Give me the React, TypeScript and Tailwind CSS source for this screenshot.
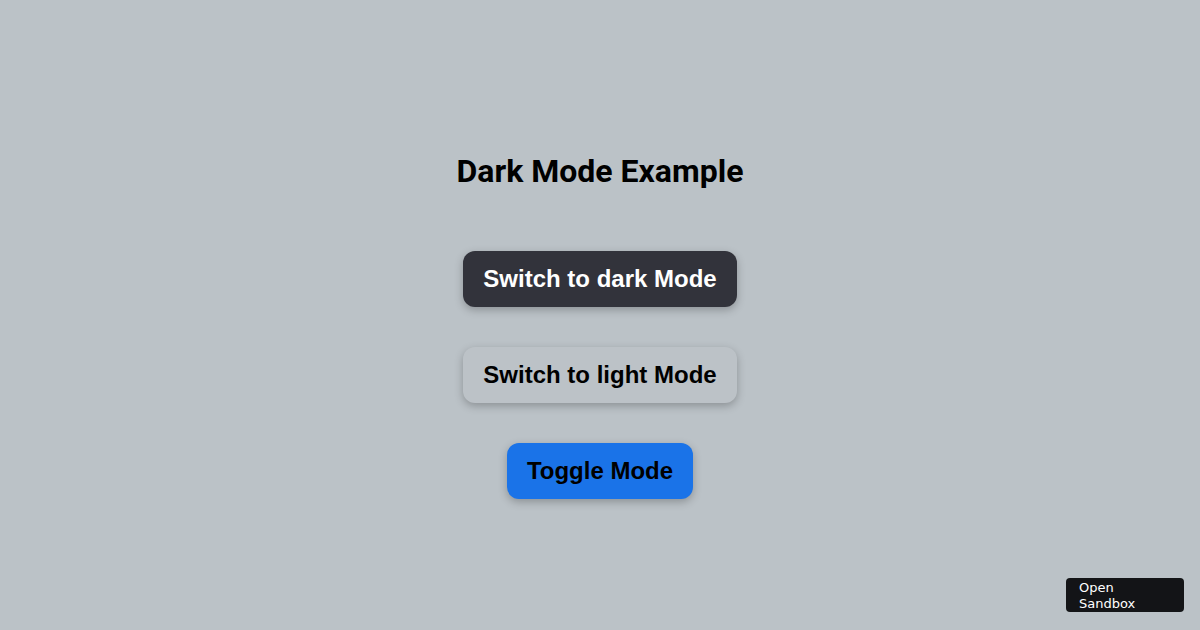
import React from "react";

const App = () => {
    return (
        <div className="relative w-full h-[630px] bg-[#bbc2c7] overflow-hidden">
            <div className="flex flex-col items-center pt-[152px]">
                {/* Title */}
                <h1 className="text-[32px] leading-[38px] font-bold text-black mb-[61px] font-['Roboto',sans-serif]">
                    Dark Mode Example
                </h1>

                {/* Buttons */}
                <div className="flex flex-col items-center gap-[40px] font-['Liberation_Sans',Arial,sans-serif]">
                    <button className="h-[56px] px-[20px] rounded-[12px] bg-[#32333b] text-white text-[24px] font-bold shadow-[0_3px_8px_rgba(0,0,0,0.25)]">
                        Switch to dark Mode
                    </button>
                    <button className="h-[56px] px-[20px] rounded-[12px] bg-[#bcc2c7] text-black text-[24px] font-bold shadow-[0_3px_8px_rgba(0,0,0,0.25)]">
                        Switch to light Mode
                    </button>
                    <button className="h-[56px] px-[20px] rounded-[12px] bg-[#1a73e8] text-black text-[24px] font-bold shadow-[0_3px_8px_rgba(0,0,0,0.25)]">
                        Toggle Mode
                    </button>
                </div>
            </div>

            {/* Sandbox badge */}
            <div className="absolute right-[16px] bottom-[18px] w-[118px] h-[34px] rounded-[4px] bg-[#131417] text-white text-[13px] leading-[16px] pl-[13px] pt-[2px] font-['DejaVu_Sans',sans-serif]">
                <span className="block w-[70px]">Open Sandbox</span>
            </div>
        </div>
    );
};

export default App;
